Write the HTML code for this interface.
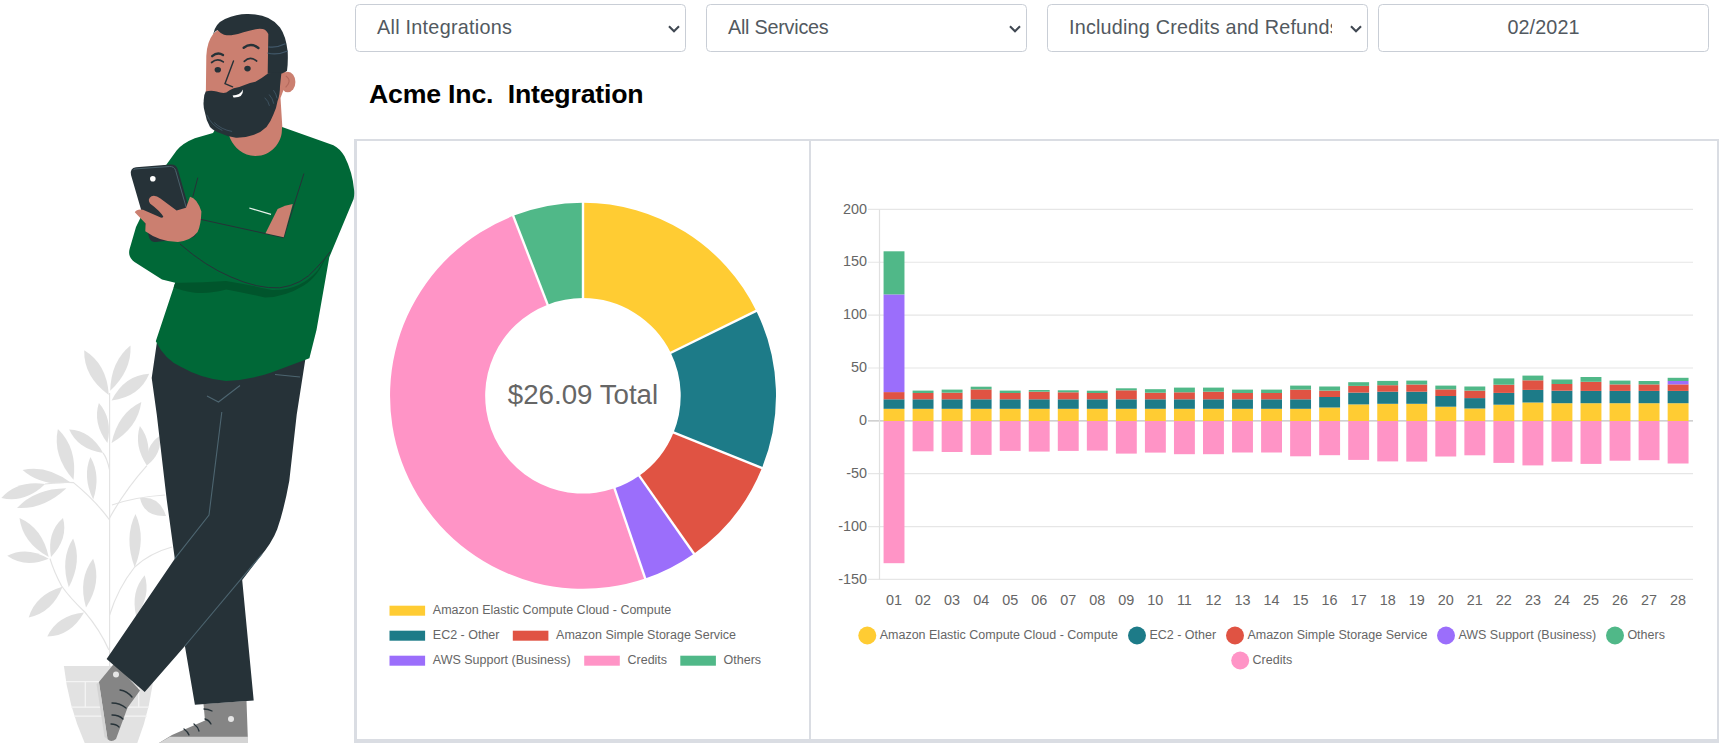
<!DOCTYPE html>
<html lang="en">
<head>
<meta charset="utf-8">
<title>Acme Inc. Integration</title>
<style>
html,body{margin:0;padding:0;background:#fff;}
body{width:1723px;height:743px;position:relative;overflow:hidden;font-family:"Liberation Sans",sans-serif;}
.sel{position:absolute;top:4px;height:48px;box-sizing:border-box;border:1px solid #c9ced6;border-radius:4.5px;background:#fff;color:#525960;font-size:19.8px;line-height:45px;padding-left:21px;white-space:nowrap;overflow:hidden;}
.sel svg{position:absolute;right:4.8px;top:19.7px;}
.sel span{display:inline-block;overflow:hidden;vertical-align:top;}
h1{position:absolute;left:369px;top:77px;margin:0;font-size:26.7px;line-height:34px;font-weight:bold;color:#000;letter-spacing:-0.2px;white-space:pre;}
.card{position:absolute;left:354px;top:139px;width:1365px;height:610px;box-sizing:border-box;border:2px solid #dadde3;border-left-width:3px;border-bottom-width:4px;height:604px;}
.divider{position:absolute;left:809px;top:141px;width:2px;height:598px;background:#dadde3;}
svg text{font-family:"Liberation Sans",sans-serif;}
#charts{position:absolute;left:0;top:0;}
#man{position:absolute;left:0;top:0;}
</style>
</head>
<body>
<div class="card"></div>
<div class="divider"></div>
<div class="sel" style="left:355px;width:331px;letter-spacing:0.27px">All Integrations<svg width="12" height="8" viewBox="0 0 12 8"><path d="M1 1.2L6 6.3L11 1.2" fill="none" stroke="#424a54" stroke-width="2.1"/></svg></div>
<div class="sel" style="left:706px;width:321px;letter-spacing:-0.24px">All Services<svg width="12" height="8" viewBox="0 0 12 8"><path d="M1 1.2L6 6.3L11 1.2" fill="none" stroke="#424a54" stroke-width="2.1"/></svg></div>
<div class="sel" style="left:1047px;width:321px;letter-spacing:0.2px"><span style="width:263px">Including Credits and Refunds</span><svg width="12" height="8" viewBox="0 0 12 8"><path d="M1 1.2L6 6.3L11 1.2" fill="none" stroke="#424a54" stroke-width="2.1"/></svg></div>
<div class="sel" style="left:1378px;width:331px;padding-left:0;text-align:center;letter-spacing:0.1px">02/2021</div>
<h1>Acme Inc.  Integration</h1>
<svg id="charts" width="1723" height="743" viewBox="0 0 1723 743">
<g id="pie">
<path d="M583 202.8A193 193 0 0 1 756.32 310.89L670.74 352.82A97.7 97.7 0 0 0 583 298.1Z" fill="#ffcc33"/>
<path d="M756.32 310.89A193 193 0 0 1 761.95 468.1L673.59 432.4A97.7 97.7 0 0 0 670.74 352.82Z" fill="#1d7b88"/>
<path d="M761.95 468.1A193 193 0 0 1 693.98 553.7L639.18 475.73A97.7 97.7 0 0 0 673.59 432.4Z" fill="#e05343"/>
<path d="M693.98 553.7A193 193 0 0 1 645.2 578.5L614.49 488.29A97.7 97.7 0 0 0 639.18 475.73Z" fill="#9b6efb"/>
<path d="M645.2 578.5A193 193 0 0 1 513.21 215.86L547.67 304.71A97.7 97.7 0 0 0 614.49 488.29Z" fill="#ff94c6"/>
<path d="M513.21 215.86A193 193 0 0 1 583 202.8L583 298.1A97.7 97.7 0 0 0 547.67 304.71Z" fill="#50b888"/>
<line x1="583" y1="299.1" x2="583" y2="201.8" stroke="#fff" stroke-width="2.4"/>
<line x1="669.84" y1="353.26" x2="757.22" y2="310.45" stroke="#fff" stroke-width="2.4"/>
<line x1="672.66" y1="432.02" x2="762.87" y2="468.47" stroke="#fff" stroke-width="2.4"/>
<line x1="638.6" y1="474.92" x2="694.55" y2="554.52" stroke="#fff" stroke-width="2.4"/>
<line x1="614.16" y1="487.34" x2="645.52" y2="579.45" stroke="#fff" stroke-width="2.4"/>
<line x1="548.03" y1="305.64" x2="512.84" y2="214.93" stroke="#fff" stroke-width="2.4"/>
<text x="583" y="403.7" text-anchor="middle" font-size="27.7" fill="#666666">$26.09 Total</text>
<g font-size="12.5" fill="#666666">
<rect x="389.5" y="605.7" width="35.6" height="10" fill="#ffcc33"/><text x="432.8" y="614.3">Amazon Elastic Compute Cloud - Compute</text>
<rect x="389.5" y="630.7" width="35.6" height="10" fill="#1d7b88"/><text x="432.8" y="639.3">EC2 - Other</text>
<rect x="512.8" y="630.7" width="35.6" height="10" fill="#e05343"/><text x="556.1" y="639.3">Amazon Simple Storage Service</text>
<rect x="389.5" y="655.7" width="35.6" height="10" fill="#9b6efb"/><text x="432.8" y="664.3">AWS Support (Business)</text>
<rect x="584.2" y="655.7" width="35.6" height="10" fill="#ff94c6"/><text x="627.5" y="664.3">Credits</text>
<rect x="680.3" y="655.7" width="35.6" height="10" fill="#50b888"/><text x="723.6" y="664.3">Others</text>
</g>
</g>
<g id="bar" font-size="14.4" fill="#666666">
<line x1="868" y1="209.4" x2="1693" y2="209.4" stroke="#e6e6e6" stroke-width="1.2"/>
<text x="867" y="213.5" text-anchor="end">200</text>
<line x1="868" y1="262.26" x2="1693" y2="262.26" stroke="#e6e6e6" stroke-width="1.2"/>
<text x="867" y="266.36" text-anchor="end">150</text>
<line x1="868" y1="315.12" x2="1693" y2="315.12" stroke="#e6e6e6" stroke-width="1.2"/>
<text x="867" y="319.22" text-anchor="end">100</text>
<line x1="868" y1="367.98" x2="1693" y2="367.98" stroke="#e6e6e6" stroke-width="1.2"/>
<text x="867" y="372.08" text-anchor="end">50</text>
<line x1="868" y1="420.84" x2="1693" y2="420.84" stroke="#c2c2c2" stroke-width="1.2"/>
<text x="867" y="424.94" text-anchor="end">0</text>
<line x1="868" y1="473.7" x2="1693" y2="473.7" stroke="#e6e6e6" stroke-width="1.2"/>
<text x="867" y="477.8" text-anchor="end">-50</text>
<line x1="868" y1="526.56" x2="1693" y2="526.56" stroke="#e6e6e6" stroke-width="1.2"/>
<text x="867" y="530.66" text-anchor="end">-100</text>
<line x1="868" y1="579.42" x2="1693" y2="579.42" stroke="#e6e6e6" stroke-width="1.2"/>
<text x="867" y="583.52" text-anchor="end">-150</text>
<line x1="879.5" y1="209.4" x2="879.5" y2="579.4" stroke="#e0e0e0" stroke-width="1.2"/>
<rect x="883.57" y="408.8" width="20.9" height="12.2" fill="#ffcc33"/>
<rect x="883.57" y="399.3" width="20.9" height="9.5" fill="#1d7b88"/>
<rect x="883.57" y="392.1" width="20.9" height="7.2" fill="#e05343"/>
<rect x="883.57" y="294.4" width="20.9" height="97.7" fill="#9b6efb"/>
<rect x="883.57" y="251.3" width="20.9" height="43.1" fill="#50b888"/>
<rect x="883.57" y="421" width="20.9" height="142.2" fill="#ff94c6"/>
<text x="894.02" y="604.6" text-anchor="middle">01</text>
<rect x="912.61" y="408.8" width="20.9" height="12.2" fill="#ffcc33"/>
<rect x="912.61" y="399.3" width="20.9" height="9.5" fill="#1d7b88"/>
<rect x="912.61" y="393" width="20.9" height="6.3" fill="#e05343"/>
<rect x="912.61" y="390.6" width="20.9" height="2.4" fill="#50b888"/>
<rect x="912.61" y="421" width="20.9" height="30.3" fill="#ff94c6"/>
<text x="923.06" y="604.6" text-anchor="middle">02</text>
<rect x="941.65" y="408.8" width="20.9" height="12.2" fill="#ffcc33"/>
<rect x="941.65" y="399.3" width="20.9" height="9.5" fill="#1d7b88"/>
<rect x="941.65" y="392.7" width="20.9" height="6.6" fill="#e05343"/>
<rect x="941.65" y="389.6" width="20.9" height="3.1" fill="#50b888"/>
<rect x="941.65" y="421" width="20.9" height="31" fill="#ff94c6"/>
<text x="952.1" y="604.6" text-anchor="middle">03</text>
<rect x="970.69" y="408.8" width="20.9" height="12.2" fill="#ffcc33"/>
<rect x="970.69" y="399.3" width="20.9" height="9.5" fill="#1d7b88"/>
<rect x="970.69" y="389.4" width="20.9" height="9.9" fill="#e05343"/>
<rect x="970.69" y="386.7" width="20.9" height="2.7" fill="#50b888"/>
<rect x="970.69" y="421" width="20.9" height="33.9" fill="#ff94c6"/>
<text x="981.14" y="604.6" text-anchor="middle">04</text>
<rect x="999.73" y="408.8" width="20.9" height="12.2" fill="#ffcc33"/>
<rect x="999.73" y="399.3" width="20.9" height="9.5" fill="#1d7b88"/>
<rect x="999.73" y="393" width="20.9" height="6.3" fill="#e05343"/>
<rect x="999.73" y="390.6" width="20.9" height="2.4" fill="#50b888"/>
<rect x="999.73" y="421" width="20.9" height="29.9" fill="#ff94c6"/>
<text x="1010.18" y="604.6" text-anchor="middle">05</text>
<rect x="1028.77" y="408.8" width="20.9" height="12.2" fill="#ffcc33"/>
<rect x="1028.77" y="399.3" width="20.9" height="9.5" fill="#1d7b88"/>
<rect x="1028.77" y="391.7" width="20.9" height="7.6" fill="#e05343"/>
<rect x="1028.77" y="390" width="20.9" height="1.7" fill="#50b888"/>
<rect x="1028.77" y="421" width="20.9" height="30.6" fill="#ff94c6"/>
<text x="1039.22" y="604.6" text-anchor="middle">06</text>
<rect x="1057.81" y="408.8" width="20.9" height="12.2" fill="#ffcc33"/>
<rect x="1057.81" y="399.3" width="20.9" height="9.5" fill="#1d7b88"/>
<rect x="1057.81" y="392.3" width="20.9" height="7" fill="#e05343"/>
<rect x="1057.81" y="390.3" width="20.9" height="2" fill="#50b888"/>
<rect x="1057.81" y="421" width="20.9" height="29.9" fill="#ff94c6"/>
<text x="1068.26" y="604.6" text-anchor="middle">07</text>
<rect x="1086.85" y="408.8" width="20.9" height="12.2" fill="#ffcc33"/>
<rect x="1086.85" y="399.3" width="20.9" height="9.5" fill="#1d7b88"/>
<rect x="1086.85" y="393" width="20.9" height="6.3" fill="#e05343"/>
<rect x="1086.85" y="390.7" width="20.9" height="2.3" fill="#50b888"/>
<rect x="1086.85" y="421" width="20.9" height="29.6" fill="#ff94c6"/>
<text x="1097.3" y="604.6" text-anchor="middle">08</text>
<rect x="1115.89" y="408.8" width="20.9" height="12.2" fill="#ffcc33"/>
<rect x="1115.89" y="399.3" width="20.9" height="9.5" fill="#1d7b88"/>
<rect x="1115.89" y="390.3" width="20.9" height="9" fill="#e05343"/>
<rect x="1115.89" y="388.3" width="20.9" height="2" fill="#50b888"/>
<rect x="1115.89" y="421" width="20.9" height="32.6" fill="#ff94c6"/>
<text x="1126.34" y="604.6" text-anchor="middle">09</text>
<rect x="1144.93" y="408.8" width="20.9" height="12.2" fill="#ffcc33"/>
<rect x="1144.93" y="399.3" width="20.9" height="9.5" fill="#1d7b88"/>
<rect x="1144.93" y="392.7" width="20.9" height="6.6" fill="#e05343"/>
<rect x="1144.93" y="389.2" width="20.9" height="3.5" fill="#50b888"/>
<rect x="1144.93" y="421" width="20.9" height="31.6" fill="#ff94c6"/>
<text x="1155.38" y="604.6" text-anchor="middle">10</text>
<rect x="1173.97" y="408.8" width="20.9" height="12.2" fill="#ffcc33"/>
<rect x="1173.97" y="399.3" width="20.9" height="9.5" fill="#1d7b88"/>
<rect x="1173.97" y="392.3" width="20.9" height="7" fill="#e05343"/>
<rect x="1173.97" y="387.6" width="20.9" height="4.7" fill="#50b888"/>
<rect x="1173.97" y="421" width="20.9" height="33.2" fill="#ff94c6"/>
<text x="1184.42" y="604.6" text-anchor="middle">11</text>
<rect x="1203.01" y="408.8" width="20.9" height="12.2" fill="#ffcc33"/>
<rect x="1203.01" y="399.3" width="20.9" height="9.5" fill="#1d7b88"/>
<rect x="1203.01" y="391.7" width="20.9" height="7.6" fill="#e05343"/>
<rect x="1203.01" y="387.6" width="20.9" height="4.1" fill="#50b888"/>
<rect x="1203.01" y="421" width="20.9" height="33.2" fill="#ff94c6"/>
<text x="1213.46" y="604.6" text-anchor="middle">12</text>
<rect x="1232.05" y="408.8" width="20.9" height="12.2" fill="#ffcc33"/>
<rect x="1232.05" y="399.3" width="20.9" height="9.5" fill="#1d7b88"/>
<rect x="1232.05" y="393" width="20.9" height="6.3" fill="#e05343"/>
<rect x="1232.05" y="389.6" width="20.9" height="3.4" fill="#50b888"/>
<rect x="1232.05" y="421" width="20.9" height="31.5" fill="#ff94c6"/>
<text x="1242.5" y="604.6" text-anchor="middle">13</text>
<rect x="1261.09" y="408.8" width="20.9" height="12.2" fill="#ffcc33"/>
<rect x="1261.09" y="399.3" width="20.9" height="9.5" fill="#1d7b88"/>
<rect x="1261.09" y="393" width="20.9" height="6.3" fill="#e05343"/>
<rect x="1261.09" y="389.6" width="20.9" height="3.4" fill="#50b888"/>
<rect x="1261.09" y="421" width="20.9" height="31.5" fill="#ff94c6"/>
<text x="1271.54" y="604.6" text-anchor="middle">14</text>
<rect x="1290.13" y="408.8" width="20.9" height="12.2" fill="#ffcc33"/>
<rect x="1290.13" y="399.3" width="20.9" height="9.5" fill="#1d7b88"/>
<rect x="1290.13" y="389.6" width="20.9" height="9.7" fill="#e05343"/>
<rect x="1290.13" y="385.6" width="20.9" height="4" fill="#50b888"/>
<rect x="1290.13" y="421" width="20.9" height="35.3" fill="#ff94c6"/>
<text x="1300.58" y="604.6" text-anchor="middle">15</text>
<rect x="1319.17" y="407.5" width="20.9" height="13.5" fill="#ffcc33"/>
<rect x="1319.17" y="397" width="20.9" height="10.5" fill="#1d7b88"/>
<rect x="1319.17" y="390.6" width="20.9" height="6.4" fill="#e05343"/>
<rect x="1319.17" y="386.5" width="20.9" height="4.1" fill="#50b888"/>
<rect x="1319.17" y="421" width="20.9" height="34.2" fill="#ff94c6"/>
<text x="1329.62" y="604.6" text-anchor="middle">16</text>
<rect x="1348.21" y="404.4" width="20.9" height="16.6" fill="#ffcc33"/>
<rect x="1348.21" y="392.6" width="20.9" height="11.8" fill="#1d7b88"/>
<rect x="1348.21" y="385.9" width="20.9" height="6.7" fill="#e05343"/>
<rect x="1348.21" y="382.2" width="20.9" height="3.7" fill="#50b888"/>
<rect x="1348.21" y="421" width="20.9" height="38.9" fill="#ff94c6"/>
<text x="1358.66" y="604.6" text-anchor="middle">17</text>
<rect x="1377.25" y="403.8" width="20.9" height="17.2" fill="#ffcc33"/>
<rect x="1377.25" y="391.7" width="20.9" height="12.1" fill="#1d7b88"/>
<rect x="1377.25" y="385.2" width="20.9" height="6.5" fill="#e05343"/>
<rect x="1377.25" y="380.9" width="20.9" height="4.3" fill="#50b888"/>
<rect x="1377.25" y="421" width="20.9" height="40.4" fill="#ff94c6"/>
<text x="1387.7" y="604.6" text-anchor="middle">18</text>
<rect x="1406.29" y="403.8" width="20.9" height="17.2" fill="#ffcc33"/>
<rect x="1406.29" y="391.7" width="20.9" height="12.1" fill="#1d7b88"/>
<rect x="1406.29" y="384.5" width="20.9" height="7.2" fill="#e05343"/>
<rect x="1406.29" y="380.6" width="20.9" height="3.9" fill="#50b888"/>
<rect x="1406.29" y="421" width="20.9" height="40.6" fill="#ff94c6"/>
<text x="1416.74" y="604.6" text-anchor="middle">19</text>
<rect x="1435.33" y="406.7" width="20.9" height="14.3" fill="#ffcc33"/>
<rect x="1435.33" y="396" width="20.9" height="10.7" fill="#1d7b88"/>
<rect x="1435.33" y="389.4" width="20.9" height="6.6" fill="#e05343"/>
<rect x="1435.33" y="385.6" width="20.9" height="3.8" fill="#50b888"/>
<rect x="1435.33" y="421" width="20.9" height="35.5" fill="#ff94c6"/>
<text x="1445.78" y="604.6" text-anchor="middle">20</text>
<rect x="1464.37" y="408.5" width="20.9" height="12.5" fill="#ffcc33"/>
<rect x="1464.37" y="398.1" width="20.9" height="10.4" fill="#1d7b88"/>
<rect x="1464.37" y="390.6" width="20.9" height="7.5" fill="#e05343"/>
<rect x="1464.37" y="386.5" width="20.9" height="4.1" fill="#50b888"/>
<rect x="1464.37" y="421" width="20.9" height="34.3" fill="#ff94c6"/>
<text x="1474.82" y="604.6" text-anchor="middle">21</text>
<rect x="1493.41" y="404.7" width="20.9" height="16.3" fill="#ffcc33"/>
<rect x="1493.41" y="392.9" width="20.9" height="11.8" fill="#1d7b88"/>
<rect x="1493.41" y="384.7" width="20.9" height="8.2" fill="#e05343"/>
<rect x="1493.41" y="378.4" width="20.9" height="6.3" fill="#50b888"/>
<rect x="1493.41" y="421" width="20.9" height="41.9" fill="#ff94c6"/>
<text x="1503.86" y="604.6" text-anchor="middle">22</text>
<rect x="1522.45" y="402.5" width="20.9" height="18.5" fill="#ffcc33"/>
<rect x="1522.45" y="389.9" width="20.9" height="12.6" fill="#1d7b88"/>
<rect x="1522.45" y="380.3" width="20.9" height="9.6" fill="#e05343"/>
<rect x="1522.45" y="375.6" width="20.9" height="4.7" fill="#50b888"/>
<rect x="1522.45" y="421" width="20.9" height="44.4" fill="#ff94c6"/>
<text x="1532.9" y="604.6" text-anchor="middle">23</text>
<rect x="1551.49" y="403.2" width="20.9" height="17.8" fill="#ffcc33"/>
<rect x="1551.49" y="390.7" width="20.9" height="12.5" fill="#1d7b88"/>
<rect x="1551.49" y="384" width="20.9" height="6.7" fill="#e05343"/>
<rect x="1551.49" y="379.5" width="20.9" height="4.5" fill="#50b888"/>
<rect x="1551.49" y="421" width="20.9" height="40.7" fill="#ff94c6"/>
<text x="1561.94" y="604.6" text-anchor="middle">24</text>
<rect x="1580.53" y="403.2" width="20.9" height="17.8" fill="#ffcc33"/>
<rect x="1580.53" y="390.9" width="20.9" height="12.3" fill="#1d7b88"/>
<rect x="1580.53" y="381.8" width="20.9" height="9.1" fill="#e05343"/>
<rect x="1580.53" y="377" width="20.9" height="4.8" fill="#50b888"/>
<rect x="1580.53" y="421" width="20.9" height="42.9" fill="#ff94c6"/>
<text x="1590.98" y="604.6" text-anchor="middle">25</text>
<rect x="1609.57" y="403.2" width="20.9" height="17.8" fill="#ffcc33"/>
<rect x="1609.57" y="390.9" width="20.9" height="12.3" fill="#1d7b88"/>
<rect x="1609.57" y="384.4" width="20.9" height="6.5" fill="#e05343"/>
<rect x="1609.57" y="380.6" width="20.9" height="3.8" fill="#50b888"/>
<rect x="1609.57" y="421" width="20.9" height="39.7" fill="#ff94c6"/>
<text x="1620.02" y="604.6" text-anchor="middle">26</text>
<rect x="1638.61" y="403.2" width="20.9" height="17.8" fill="#ffcc33"/>
<rect x="1638.61" y="390.9" width="20.9" height="12.3" fill="#1d7b88"/>
<rect x="1638.61" y="384.4" width="20.9" height="6.5" fill="#e05343"/>
<rect x="1638.61" y="381" width="20.9" height="3.4" fill="#50b888"/>
<rect x="1638.61" y="421" width="20.9" height="39.2" fill="#ff94c6"/>
<text x="1649.06" y="604.6" text-anchor="middle">27</text>
<rect x="1667.65" y="403.2" width="20.9" height="17.8" fill="#ffcc33"/>
<rect x="1667.65" y="390.9" width="20.9" height="12.3" fill="#1d7b88"/>
<rect x="1667.65" y="384.4" width="20.9" height="6.5" fill="#e05343"/>
<rect x="1667.65" y="381" width="20.9" height="3.4" fill="#9b6efb"/>
<rect x="1667.65" y="377.8" width="20.9" height="3.2" fill="#50b888"/>
<rect x="1667.65" y="421" width="20.9" height="42.5" fill="#ff94c6"/>
<text x="1678.1" y="604.6" text-anchor="middle">28</text>
</g>
<g id="barlegend" font-size="12.5" fill="#666666">
<circle cx="867.3" cy="635.5" r="9" fill="#ffcc33"/><text x="879.7" y="639.1">Amazon Elastic Compute Cloud - Compute</text>
<circle cx="1137" cy="635.5" r="9" fill="#1d7b88"/><text x="1149.4" y="639.1">EC2 - Other</text>
<circle cx="1235" cy="635.5" r="9" fill="#e05343"/><text x="1247.4" y="639.1">Amazon Simple Storage Service</text>
<circle cx="1446" cy="635.5" r="9" fill="#9b6efb"/><text x="1458.4" y="639.1">AWS Support (Business)</text>
<circle cx="1615" cy="635.5" r="9" fill="#50b888"/><text x="1627.4" y="639.1">Others</text>
<circle cx="1240.2" cy="660.5" r="9" fill="#ff94c6"/><text x="1252.6" y="664.1">Credits</text>
</g>
</svg>
<svg id="man" width="360" height="743" viewBox="0 0 360 743">
<!-- plant -->
<g fill="#e0e0e0">
<path d="M63.9 665.9H154.5Q152 705 137.3 743H84.7Q68 705 63.9 665.9Z" fill="#e2e2e2"/>
<g stroke="#f4f4f4" stroke-width="1.3" fill="none"><path d="M66 681.6H153"/><path d="M71 707.2H149"/><path d="M74 716.2H147"/><path d="M85.3 681.6V707.2"/><path d="M138.7 681.6V707.2"/></g>
<g id="leaves">
<path d="M108.8 395Q106.9 364 84.2 350.3Q83.6 376.8 108.8 395Z"/>
<path d="M110.2 390.8Q131.8 370.5 130.5 345.5Q111 361.2 110.2 390.8Z"/>
<path d="M111.6 400.6Q140 396.7 149.2 373.8Q124.6 375 111.6 400.6Z"/>
<path d="M107.4 443Q112.9 418.8 98.9 402.9Q92.5 423.1 107.4 443Z"/>
<path d="M111.6 443Q137.9 427.7 141.3 402Q117.9 413.2 111.6 443Z"/>
<path d="M103.1 452.9Q90.9 430.6 69.2 429.5Q78 449.4 103.1 452.9Z"/>
<path d="M146.9 465.6Q152.4 442.2 139.9 426Q133.7 445.5 146.9 465.6Z"/>
<path d="M146.9 465.6Q162.6 453.1 159.6 436Q145.2 445.6 146.9 465.6Z"/>
<path d="M73.5 479.8Q77.6 447.9 57.9 428.9Q52.2 455.7 73.5 479.8Z"/>
<path d="M70.6 482.6Q47.1 464.6 22.6 469.9Q41.3 486.6 70.6 482.6Z"/>
<path d="M45.2 484Q17.3 479.9 1.4 498Q24.9 503.5 45.2 484Z"/>
<path d="M66.4 488.2Q35 488.5 17 508Q43.5 509.7 66.4 488.2Z"/>
<path d="M93.2 499.5Q101.1 475.5 90.4 457Q82.2 476.7 93.2 499.5Z"/>
<path d="M166 516Q159.3 495.2 140 498Q144.1 517 166 516Z"/>
<path d="M48.7 557Q42.5 528.1 19.5 518Q22.8 543 48.7 557Z"/>
<path d="M48.7 558.7Q26.7 545.7 7.2 555.8Q25.1 568.5 48.7 558.7Z"/>
<path d="M51 557Q68.5 538.9 63 518Q46.7 532.2 51 557Z"/>
<path d="M68.8 587.3Q82.5 561.5 73.1 538.6Q59.8 559.5 68.8 587.3Z"/>
<path d="M86 607.4Q102.1 582.4 93.1 558.7Q77.7 578.8 86 607.4Z"/>
<path d="M62.5 586.7Q35.6 594.4 28.7 617.4Q52.2 612.7 62.5 586.7Z"/>
<path d="M84 612.5Q57 615.4 47.3 636.6Q70.6 636.1 84 612.5Z"/>
<path d="M134.7 567.3Q146.5 538.2 135.5 514Q123.7 537.8 134.7 567.3Z"/>
<path d="M136.1 616Q151.1 595.8 144.7 575.3Q130.6 591.5 136.1 616Z"/>
</g>
</g>
<g fill="none" stroke="#e3e3e3" stroke-width="1.2">
<path d="M109.6 393V666"/>
<path d="M108.9 650Q100 630 84.5 611.7Q70 598 61.6 586Q54 572 50 558.7"/>
<path d="M109.6 615Q118 588 134.7 567Q150 553 172 547"/>
<path d="M109.6 520Q95 500 73.5 482.6Q60 482 45 484"/>
<path d="M109.6 518Q125 490 146.9 465.6"/>
<path d="M109.6 470Q107 458 103 452.9"/>
<path d="M112 505Q135 497 165 495"/>
</g>
<!-- right shoe (back) -->
<path d="M203.5 704L246.5 701L248 743H159L172 735L205 720.6Z" fill="#858585"/>
<path d="M159 743L170 736.8L248 736.8V743Z" fill="#d4d4d4"/>
<circle cx="231" cy="719" r="3" fill="#e6e6e6"/>
<!-- left shoe (front) -->
<path d="M114.6 663L140 690.5L127.5 707.7L116 739Q111 743 107.5 739L98.9 682Z" fill="#858585"/>
<path d="M98.9 682L107.5 739L104.5 737L96.5 684Z" fill="#d4d4d4"/>
<circle cx="116" cy="674.5" r="3" fill="#e6e6e6"/>
<g fill="none" stroke="#263238" stroke-width="1.3" stroke-linecap="round">
<path d="M120 690Q127 691 132 697"/><path d="M112 703Q120 703 126 708"/><path d="M112 715Q119 715 123 719"/><path d="M111 724Q116 724 119 727"/>
<path d="M204 709Q208 709 212 711"/><path d="M205 719Q209 720 211 724"/><path d="M194 724Q198 727 199 731"/><path d="M184 729Q188 732 189 735"/>
</g>
<!-- pants -->
<path d="M156.8 343L151.7 378L156.8 414.8L166.7 499.5L174.8 558.7L106.6 659L144.7 692L184.9 646L194.9 704.8L253.7 700.5L242.2 580L258.4 558.8Q272 543 277.2 529.2Q284 510 289.3 480.7L296.7 414.8L306 355Z" fill="#263238"/>
<g fill="none" stroke="#4d6570" stroke-width="1.1">
<path d="M221.8 412L209 515L174.8 558.7"/>
<path d="M207 396L218.5 402L240 385.5"/>
<path d="M275 374.5L300 377"/>
<path d="M262 554L184.9 646"/>
</g>
<!-- head / neck skin -->
<path d="M205.9 90L206.3 56Q206.8 42 213.5 33.5L218 30L272 26L286 60L285 86L280.5 98L282.3 126.5L284 140Q272 164 252 162Q234 158 227 138L222 120L205 100Z" fill="#cb7f70"/>
<ellipse cx="287.8" cy="82" rx="7.6" ry="10.3" fill="#cb7f70"/>
<path d="M285.9 75.9Q292.5 81 285.6 87.4" fill="none" stroke="#b4695c" stroke-width="1.2"/>
<!-- sweater -->
<path d="M213 133L194.8 138.3Q183 143 176.6 150.4L166.5 164.5L136 227L129.6 249Q127.5 257 134.5 262L162 279.4L175.2 282.7L155.8 341.3Q165 360 180.8 366.7Q202 379 226 380.9Q250 380 271.3 372.4L309.4 358.3L316.5 330L329.3 257.2L353.6 199Q354.6 195 354.1 190Q352.5 172 344.5 156.3Q340 148.5 333.4 145.2L282.1 127.1L281.8 132C281 142 272 156 255.2 156C243 156 234 147 230.4 139L226 128L216 128Z" fill="#006837"/>
<path d="M175.2 282.7Q200 283 226 281Q250 285 272 290Q300 291 318 270L327 255Q318 277 303.8 285.4Q285 297 265 297.5Q245 293 226.3 289.5Q210 294 194.8 292.7Q182 291 173.6 287.6Z" fill="#00552c"/>
<g fill="none" stroke="#263238" stroke-width="1">
<path d="M198.9 219L283.7 237.6L303.9 173.6"/>
<path d="M197.8 177.6L192.8 196.8"/>
<path d="M180 244Q205 266 231 277Q258 289 279.6 287.8Q302 285 316 268.4Q324 260 330.4 251.5"/>
</g>
<path d="M249.3 208L271 214.4" stroke="#e8f3ec" stroke-width="1.3" fill="none"/>
<!-- right hand at elbow -->
<path d="M265.5 233.2L277.6 209Q285 205 292.8 203.9L283.7 237.2Z" fill="#cb7f70"/>
<!-- phone -->
<path d="M136 167.2L170.5 164.6Q176.3 164.2 178 170L195.7 232Q196.5 237 191.7 237.4L156 242Q151 242.5 149.3 238L131 175Q129.5 168.2 136 167.2Z" fill="#263238"/>
<path d="M133.5 169.6Q135 168.9 137 168.8L169.5 166.5Q174.3 166.3 175.6 170.5L186.2 207.5" fill="none" stroke="#4a616b" stroke-width="1"/>
<circle cx="152.8" cy="178.7" r="2.8" fill="#fff"/>
<!-- left hand holding phone -->
<path d="M134.8 212.2Q137 208.5 143 209.7L159 216.8Q163 218.6 163.3 216.6Q160 211 150 203.5Q147 199 151.5 196.3Q155.5 194.8 160.4 198.5L176.6 210.5L186 207.8L190 196.7Q197 198 201.4 211.5Q201 225 197.6 232Q191 240.5 177.9 242Q160 242 145.3 231.2L145.6 223.6Z" fill="#cb7f70"/>
<!-- hair -->
<path d="M213.2 34.3Q215 23.5 225 19Q238 13.5 248.3 14Q270 14 280 27.5Q286 36 287.7 51.7Q288.2 62 287 71L282 73.5L267.7 73.5L268.3 34Q266 29.5 262.8 29Q259 28.5 255.6 29.2Q249 30.5 243.5 32.3Q237 34.8 231.3 35.3Q227 35.5 224 34.7Q220 33 217.5 30Q214.5 31.5 213.2 34.3Z" fill="#263238"/>
<g fill="none" stroke="#42596a" stroke-width="1.2"><path d="M268.3 46.8Q277 48 285.4 43.8"/><path d="M267.5 53Q277 55.5 287.7 51"/></g>
<!-- beard -->
<path d="M268.3 73.2L281.5 72L280 86.2Q280 95 277.5 101.2Q276.5 108 273.5 114.2Q271 121 266.5 127Q261 132.5 253.2 135Q245 138 236 137.8Q228 137 221 133.5Q214 131 210 127Q206 120 204.8 112Q203 106 203.7 101.2Q203.5 95 205.8 91.5Q211 90 216.6 91.5Q222 93.5 226.3 92.6Q230 89.5 233.8 88.3Q239 87.5 244.6 85Q250 82.5 255.4 81.8Q262 78 268.3 73.2Z" fill="#263238"/>
<path d="M232.6 95.6Q240 95.5 243 89.6Q243.5 98 233.5 97.6Z" fill="#fff"/>
<g fill="none" stroke="#42596a" stroke-width="0.8" stroke-linecap="round"><path d="M265 98Q268.5 101 269.4 105.5"/><path d="M269.4 94.8Q272.8 98.5 273.7 103.4"/><path d="M273.7 90.5Q276.3 94 277 98"/><path d="M207 115.2Q211 125 222 130.3"/><path d="M214.5 122.8Q221 129.5 231.7 131.4"/></g>
<!-- face features -->
<ellipse cx="217.8" cy="69.8" rx="3.2" ry="2.8" fill="#263238"/><ellipse cx="247.5" cy="68.6" rx="3.2" ry="2.8" fill="#263238"/>
<g fill="none" stroke="#263238" stroke-linecap="round">
<path d="M212.2 56.2Q217.5 51.5 223 55" stroke-width="2.4"/><path d="M243.7 47.8Q251 42.3 258.4 48" stroke-width="2.4"/>
<path d="M211.6 62.5Q217.4 57.5 223.3 61.9" stroke-width="1.7"/><path d="M244.3 61.3Q250.1 55.8 256.6 61" stroke-width="1.7"/>
<path d="M233.5 61L225 83.7L232.6 86.8" stroke-width="1.4"/>
</g>
</svg>

</body>
</html>
